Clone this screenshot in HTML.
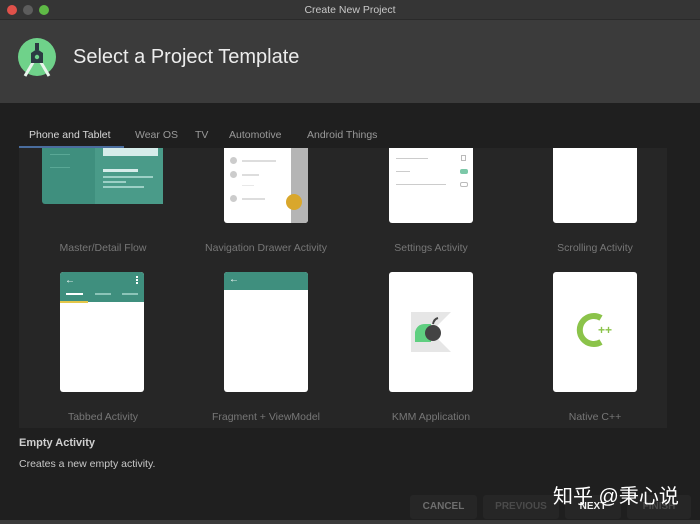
<!DOCTYPE html>
<html><head><style>
*{margin:0;padding:0;box-sizing:border-box}
body{width:700px;height:524px;background:#1f1f1f;font-family:"Liberation Sans","Noto Sans CJK SC",sans-serif;position:relative;overflow:hidden}
.abs{position:absolute}
.lbl{position:absolute;font-size:10.5px;color:#777;text-align:center;width:160px}
.card{position:absolute;background:#fff;border-radius:3px}
.btn{position:absolute;top:495px;height:24px;background:#262626;border-radius:3px;font-size:10px;font-weight:bold;color:#6e6e6e;text-align:center;line-height:24px}
</style></head><body>
<div class="abs" style="left:0;top:0;width:700px;height:20px;background:#353535;border-bottom:1px solid #2a2a2a"></div>
<div class="abs" style="left:7px;top:5px;width:10px;height:10px;border-radius:50%;background:#e0514a"></div>
<div class="abs" style="left:23px;top:5px;width:10px;height:10px;border-radius:50%;background:#5d5d5d"></div>
<div class="abs" style="left:39px;top:5px;width:10px;height:10px;border-radius:50%;background:#5fba46"></div>
<div class="abs" style="left:0;top:4px;width:700px;text-align:center;font-size:10.5px;color:#c8c8c8">Create New Project</div>
<div class="abs" style="left:0;top:20px;width:700px;height:83px;background:#3b3b3b"></div>
<svg class="abs" style="left:17px;top:37px" width="42" height="42" viewBox="0 0 42 42">
<circle cx="20" cy="20" r="19" fill="#6fd28a"/>
<path d="M8 39 L18 22 M32 39 L22 22" stroke="#e8f5ec" stroke-width="3" fill="none"/>
<path d="M14 16 L20 12 L26 16 L26 26 L14 26 Z" fill="#2b3a42"/>
<rect x="18" y="6" width="4" height="7" fill="#2b3a42"/>
<circle cx="20" cy="20" r="2.2" fill="#6fd28a"/>
</svg>
<div class="abs" style="left:73px;top:46px;font-size:20px;color:#ececec">Select a Project Template</div>
<div class="abs" style="left:29px;top:129px;font-size:10.5px;color:#d8d8d8">Phone and Tablet</div>
<div class="abs" style="left:135px;top:129px;font-size:10.5px;color:#9a9a9a">Wear OS</div>
<div class="abs" style="left:195px;top:129px;font-size:10.5px;color:#9a9a9a">TV</div>
<div class="abs" style="left:229px;top:129px;font-size:10.5px;color:#9a9a9a">Automotive</div>
<div class="abs" style="left:307px;top:129px;font-size:10.5px;color:#9a9a9a">Android Things</div>
<div class="abs" style="left:19px;top:146px;width:105px;height:2px;background:#4a6d9e"></div>
<div class="abs" style="left:19px;top:148px;width:648px;height:280px;background:#262626;overflow:hidden">
 <div class="abs" style="left:23px;top:0;width:121px;height:56px;background:#3f8f7e;border-radius:0 0 3px 3px">
  <div class="abs" style="left:53px;top:0;width:68px;height:56px;background:#4a9b89"></div>
  <div class="abs" style="left:61px;top:0;width:55px;height:8px;background:#d6ecea"></div>
  <div class="abs" style="left:8px;top:6px;width:20px;height:1px;background:#5aa896"></div>
  <div class="abs" style="left:8px;top:19px;width:20px;height:1px;background:#5aa896"></div>
  <div class="abs" style="left:61px;top:21px;width:35px;height:3px;background:#d6ecea"></div>
  <div class="abs" style="left:61px;top:28px;width:50px;height:2px;background:#9cd0c6"></div>
  <div class="abs" style="left:61px;top:33px;width:23px;height:2px;background:#9cd0c6"></div>
  <div class="abs" style="left:61px;top:38px;width:41px;height:2px;background:#9cd0c6"></div>
 </div>
 <div class="card" style="left:205px;top:-5px;width:84px;height:80px;overflow:hidden">
  <div class="abs" style="left:67px;top:0;width:17px;height:80px;background:#b5b5b5"></div>
  <div class="abs" style="left:62px;top:51px;width:16px;height:16px;border-radius:50%;background:#d9a72c"></div>
  <div class="abs" style="left:6px;top:14px;width:7px;height:7px;border-radius:50%;background:#ccc"></div>
  <div class="abs" style="left:18px;top:17px;width:34px;height:2px;background:#ddd"></div>
  <div class="abs" style="left:6px;top:28px;width:7px;height:7px;border-radius:50%;background:#ccc"></div>
  <div class="abs" style="left:18px;top:31px;width:17px;height:2px;background:#ddd"></div>
  <div class="abs" style="left:18px;top:42px;width:12px;height:1px;background:#e8e8e8"></div>
  <div class="abs" style="left:6px;top:52px;width:7px;height:7px;border-radius:50%;background:#ccc"></div>
  <div class="abs" style="left:18px;top:55px;width:23px;height:2px;background:#ddd"></div>
 </div>
 <div class="card" style="left:370px;top:-5px;width:84px;height:80px">
  <div class="abs" style="left:7px;top:15px;width:32px;height:1px;background:#ccc"></div>
  <div class="abs" style="left:72px;top:12px;width:5px;height:6px;border:1px solid #bbb"></div>
  <div class="abs" style="left:7px;top:28px;width:14px;height:1px;background:#ccc"></div>
  <div class="abs" style="left:71px;top:26px;width:8px;height:5px;border-radius:2px;background:#7cc8a8"></div>
  <div class="abs" style="left:7px;top:41px;width:50px;height:1px;background:#ccc"></div>
  <div class="abs" style="left:71px;top:39px;width:8px;height:5px;border-radius:2px;border:1px solid #bbb"></div>
 </div>
 <div class="card" style="left:534px;top:-5px;width:84px;height:80px"></div>
 <div class="lbl" style="left:4px;top:94px">Master/Detail Flow</div>
 <div class="lbl" style="left:167px;top:94px">Navigation Drawer Activity</div>
 <div class="lbl" style="left:332px;top:94px">Settings Activity</div>
 <div class="lbl" style="left:496px;top:94px">Scrolling Activity</div>
 <div class="card" style="left:41px;top:124px;width:84px;height:120px;overflow:hidden">
  <div class="abs" style="left:0;top:0;width:84px;height:30px;background:#3f8f7e"></div>
  <div class="abs" style="left:5px;top:3px;color:#fff;font-size:10px">←</div>
  <div class="abs" style="left:76px;top:4px;width:2px;height:8px;border-left:2px dotted #fff"></div>
  <div class="abs" style="left:6px;top:21px;width:17px;height:2px;background:#fff"></div>
  <div class="abs" style="left:35px;top:21px;width:16px;height:2px;background:#8cc4b8"></div>
  <div class="abs" style="left:62px;top:21px;width:16px;height:2px;background:#8cc4b8"></div>
  <div class="abs" style="left:0;top:29px;width:28px;height:2px;background:#e4c74a"></div>
 </div>
 <div class="card" style="left:205px;top:124px;width:84px;height:120px;overflow:hidden">
  <div class="abs" style="left:0;top:0;width:84px;height:18px;background:#3f8f7e"></div>
  <div class="abs" style="left:5px;top:2px;color:#fff;font-size:10px">←</div>
 </div>
 <div class="card" style="left:370px;top:124px;width:84px;height:120px">
  <svg class="abs" style="left:22px;top:40px" width="42" height="40" viewBox="0 0 42 40">
   <path d="M0 0 H40 L20 20 L40 40 H0 Z" fill="#e6e6e6"/>
   <path d="M4 30 V20 Q6 12 14 12 H20 V30 Z" fill="#5fcf80"/>
   <circle cx="22" cy="21" r="8" fill="#444"/>
   <path d="M22 12 Q23 7 27 6" stroke="#444" stroke-width="2" fill="none"/>
  </svg>
 </div>
 <div class="card" style="left:534px;top:124px;width:84px;height:120px">
  <svg class="abs" style="left:20px;top:38px" width="50" height="40" viewBox="0 0 50 40">
   <path d="M28 8 A14 14 0 1 0 28 32" stroke="#8bc34a" stroke-width="6" fill="none"/>
   <text x="25" y="24" font-family="Liberation Sans" font-size="12" fill="#8bc34a" font-weight="bold">++</text>
  </svg>
 </div>
 <div class="lbl" style="left:4px;top:263px">Tabbed Activity</div>
 <div class="lbl" style="left:167px;top:263px">Fragment + ViewModel</div>
 <div class="lbl" style="left:332px;top:263px">KMM Application</div>
 <div class="lbl" style="left:496px;top:263px">Native C++</div>
</div>
<div class="abs" style="left:19px;top:437px;font-size:11px;font-weight:bold;color:#d0d0d0">Empty Activity</div>
<div class="abs" style="left:19px;top:458px;font-size:10.5px;color:#c8c8c8">Creates a new empty activity.</div>
<div class="btn" style="left:410px;width:67px">CANCEL</div>
<div class="btn" style="left:483px;width:76px;color:#4a4a4a">PREVIOUS</div>
<div class="btn" style="left:565px;width:56px;color:#f0f0f0">NEXT</div>
<div class="btn" style="left:627px;width:64px;color:#4a4a4a">FINISH</div>
<div class="abs" style="left:553px;top:480px;font-size:20px;color:#fff">知乎 @秉心说</div>
<div class="abs" style="left:0;top:520px;width:700px;height:4px;background:#3a3a3a"></div>
</body></html>
